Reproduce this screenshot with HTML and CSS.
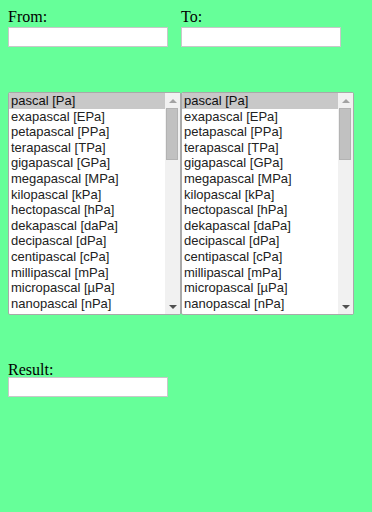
FILE: index.html
```html
<!DOCTYPE html>
<html lang="en">
<head>
    <meta charset="UTF-8">
    <meta name="viewport" content="width=device-width, initial-scale=1.0">
    <title>Pressure Converter</title>
    <link rel="stylesheet" href="styles.css">
</head>
<body>
    <div class="linha">
        <div class="campo">
            <label for="de">From:</label>
            <input type="text" id="de">
        </div>
        <div class="campo">
            <label for="para">To:</label>
            <input type="text" id="para">
        </div>
    </div>

    <div class="listas">
        <div class="lista">
            <select id="unidade-de" size="14">
                <option selected>pascal [Pa]</option>
                <option>exapascal [EPa]</option>
                <option>petapascal [PPa]</option>
                <option>terapascal [TPa]</option>
                <option>gigapascal [GPa]</option>
                <option>megapascal [MPa]</option>
                <option>kilopascal [kPa]</option>
                <option>hectopascal [hPa]</option>
                <option>dekapascal [daPa]</option>
                <option>decipascal [dPa]</option>
                <option>centipascal [cPa]</option>
                <option>millipascal [mPa]</option>
                <option>micropascal [µPa]</option>
                <option>nanopascal [nPa]</option>
                <option>picopascal [pPa]</option>
                <option>femtopascal [fPa]</option>
                <option>attopascal [aPa]</option>
                <option>newton/square meter</option>
                <option>newton/square centimeter</option>
                <option>newton/square millimeter</option>
                <option>kilonewton/square meter</option>
                <option>bar</option>
                <option>millibar</option>
                <option>microbar</option>
                <option>dyne/square centimeter</option>
                <option>kilogram-force/square meter</option>
                <option>kilogram-force/sq. centimeter</option>
                <option>kilogram-force/sq. millimeter</option>
                <option>gram-force/sq. centimeter</option>
                <option>ton-force (short)/sq. foot</option>
                <option>ton-force (short)/sq. inch</option>
                <option>ton-force (long)/square foot</option>
                <option>ton-force (long)/square inch</option>
                <option>kip-force/square inch</option>
                <option>pound-force/square foot</option>
                <option>pound-force/square inch</option>
                <option>poundal/square foot</option>
                <option>torr</option>
                <option>centimeter mercury (0°C)</option>
                <option>millimeter mercury (0°C)</option>
                <option>inch mercury (32°F)</option>
                <option>inch mercury (60°F)</option>
                <option>centimeter water (4°C)</option>
                <option>millimeter water (4°C)</option>
                <option>inch water (4°C)</option>
                <option>foot water (4°C)</option>
                <option>inch water (60°F)</option>
                <option>foot water (60°F)</option>
                <option>atmosphere, technical</option>
                <option>atmosphere, standard</option>
            </select>
            <div class="barra" aria-hidden="true">
                <span class="seta seta-cima"></span>
                <span class="cursor"></span>
                <span class="trilho"></span>
                <span class="seta seta-baixo"></span>
            </div>
        </div>
        <div class="lista">
            <select id="unidade-para" size="14">
                <option selected>pascal [Pa]</option>
                <option>exapascal [EPa]</option>
                <option>petapascal [PPa]</option>
                <option>terapascal [TPa]</option>
                <option>gigapascal [GPa]</option>
                <option>megapascal [MPa]</option>
                <option>kilopascal [kPa]</option>
                <option>hectopascal [hPa]</option>
                <option>dekapascal [daPa]</option>
                <option>decipascal [dPa]</option>
                <option>centipascal [cPa]</option>
                <option>millipascal [mPa]</option>
                <option>micropascal [µPa]</option>
                <option>nanopascal [nPa]</option>
                <option>picopascal [pPa]</option>
                <option>femtopascal [fPa]</option>
                <option>attopascal [aPa]</option>
                <option>newton/square meter</option>
                <option>newton/square centimeter</option>
                <option>newton/square millimeter</option>
                <option>kilonewton/square meter</option>
                <option>bar</option>
                <option>millibar</option>
                <option>microbar</option>
                <option>dyne/square centimeter</option>
                <option>kilogram-force/square meter</option>
                <option>kilogram-force/sq. centimeter</option>
                <option>kilogram-force/sq. millimeter</option>
                <option>gram-force/sq. centimeter</option>
                <option>ton-force (short)/sq. foot</option>
                <option>ton-force (short)/sq. inch</option>
                <option>ton-force (long)/square foot</option>
                <option>ton-force (long)/square inch</option>
                <option>kip-force/square inch</option>
                <option>pound-force/square foot</option>
                <option>pound-force/square inch</option>
                <option>poundal/square foot</option>
                <option>torr</option>
                <option>centimeter mercury (0°C)</option>
                <option>millimeter mercury (0°C)</option>
                <option>inch mercury (32°F)</option>
                <option>inch mercury (60°F)</option>
                <option>centimeter water (4°C)</option>
                <option>millimeter water (4°C)</option>
                <option>inch water (4°C)</option>
                <option>foot water (4°C)</option>
                <option>inch water (60°F)</option>
                <option>foot water (60°F)</option>
                <option>atmosphere, technical</option>
                <option>atmosphere, standard</option>
            </select>
            <div class="barra" aria-hidden="true">
                <span class="seta seta-cima"></span>
                <span class="cursor"></span>
                <span class="trilho"></span>
                <span class="seta seta-baixo"></span>
            </div>
        </div>
    </div>

    <div class="campo resultado">
        <label for="resultado">Result:</label>
        <input type="text" id="resultado">
    </div>
</body>
</html>
```

FILE: styles.css
```css
body {
    font-family: "Liberation Serif", serif;
    font-size: 16px;
    background-color: #66ff99;
    color: #000;
    margin: 8px;
}
.linha {
    display: flex;
    gap: 13px;
}
.campo {
    display: flex;
    flex-direction: column;
}
.campo label {
    line-height: 18px;
    height: 19px;
}
.campo input {
    width: 160px;
    height: 20px;
    box-sizing: border-box;
    border: 1px solid #c8c8c8;
    background: #fff;
    padding: 1px 2px;
    margin: 0;
}
.listas {
    display: flex;
    margin-top: 45px;
}
.lista {
    position: relative;
    width: 173px;
    height: 223px;
}
.lista select {
    display: block;
    width: 173px;
    height: 223px;
    box-sizing: border-box;
    font-family: "Liberation Sans", Arial, sans-serif;
    font-size: 13px;
    color: #222;
    border: 1px solid #a9a9a9;
    background: #fff;
    margin: 0;
    padding: 0;
}
.lista option {
    padding: 0 2px;
    line-height: 15.7px;
}
.lista option:checked {
    background: #c8c8c8;
}
/* barra de rolagem desenhada por cima da lista */
.barra {
    position: absolute;
    top: 1px;
    right: 1px;
    bottom: 1px;
    width: 15px;
    background: #f1f1f1;
    display: flex;
    flex-direction: column;
}
.seta {
    height: 15px;
    flex-shrink: 0;
    display: flex;
    justify-content: center;
    align-items: center;
}
.seta::before {
    content: "";
    width: 0;
    height: 0;
    border-left: 4px solid transparent;
    border-right: 4px solid transparent;
}
.seta-cima::before {
    border-bottom: 4px solid #a3a3a3;
}
.seta-baixo::before {
    border-top: 4px solid #505050;
}
.cursor {
    height: 52px;
    margin: 0 2px 0 1px;
    box-sizing: border-box;
    background: #c1c1c1;
    border: 1px solid #b3b3b3;
    flex-shrink: 0;
}
.trilho {
    flex: 1;
}
.resultado {
    margin-top: 46px;
}
.resultado label {
    height: 16px;
}
```
